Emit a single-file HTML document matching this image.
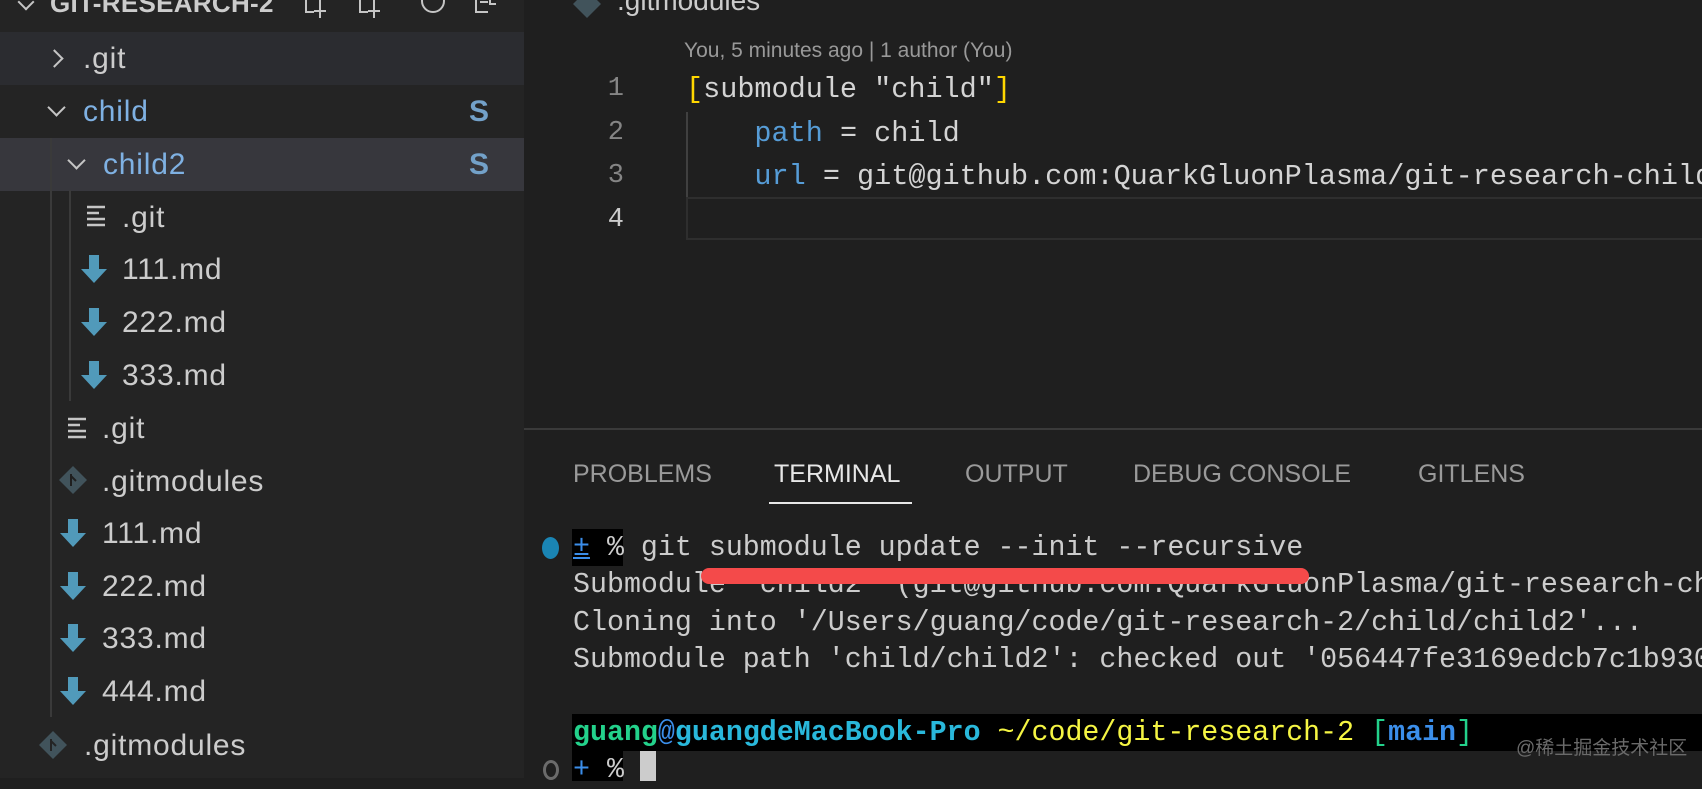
<!DOCTYPE html>
<html><head><meta charset="utf-8"><style>
*{margin:0;padding:0;box-sizing:border-box}
body{width:1702px;height:778px;overflow:hidden;background:#1f1f1f;position:relative;font-family:"Liberation Sans",sans-serif}
.a{position:absolute;white-space:pre}
#side{position:absolute;left:0;top:0;width:524px;height:778px;background:#242424}
.row{position:absolute;left:0;width:524px;height:53px}
.fn{position:absolute;font-size:30px;letter-spacing:0.8px;color:#cccccc;line-height:53px;white-space:pre}
.mono{font-family:"Liberation Mono",monospace}
.chev{position:absolute;width:13px;height:13px;border-right:2px solid #c5c5c5;border-bottom:2px solid #c5c5c5}
.arr{position:absolute;width:26px;height:30px}
.t{position:absolute;font-size:28.3px;color:#cccccc;line-height:37.3px;white-space:pre;font-family:"Liberation Mono",monospace}
</style></head><body>
<div id="side">
 <div class="row" style="top:32px;background:#2b2c30"></div>
 <div class="row" style="top:138px;background:#37373d"></div>
 <div class="chev" style="left:20px;top:-4px;transform:rotate(45deg);width:12px;height:12px"></div>
 <div class="a" style="left:50px;top:-12px;font-size:26px;font-weight:bold;color:#cccccc;letter-spacing:0.3px">GIT-RESEARCH-2</div>
 <svg class="a" style="left:300px;top:-6px" width="210" height="26" fill="none" stroke="#c5c5c5" stroke-width="2">
  <path d="M6 0v18h8M20 6v18M14 17h12"/>
  <path d="M60 0v18h8M74 6v18M68 17h12"/>
  <circle cx="133" cy="7" r="11"/>
  <path d="M176 0v18h12M180 8h8M190 0v10h6"/>
 </svg>
 <div class="a" style="left:50px;top:138px;width:2px;height:579px;background:#3a3a3a"></div>
 <div class="a" style="left:69px;top:190px;width:2px;height:211px;background:#3a3a3a"></div>
 <div class="chev" style="left:48px;top:52px;transform:rotate(-45deg)"></div>
 <div class="fn" style="left:83px;top:32px">.git</div>
 <div class="chev" style="left:50px;top:101px;transform:rotate(45deg)"></div>
 <div class="fn" style="left:83px;top:85px;color:#7fb1e3">child</div>
 <div class="fn" style="left:469px;top:85px;color:#73a1c9;font-weight:bold">S</div>
 <div class="chev" style="left:70px;top:154px;transform:rotate(45deg)"></div>
 <div class="fn" style="left:103px;top:138px;color:#7fb1e3">child2</div>
 <div class="fn" style="left:469px;top:138px;color:#73a1c9;font-weight:bold">S</div>
 <svg class="a" style="left:86px;top:205px" width="22" height="22" stroke="#c5c5c5" stroke-width="2.5"><path d="M1 2h18M1 8h12M1 14h18M1 20h18"/></svg>
 <div class="fn" style="left:122px;top:191px">.git</div>
 <svg class="arr" style="left:81px;top:255px" viewBox="0 0 26 30"><path fill="#519aba" d="M8 0h10v14h8L13 28 0 14h8z"/></svg>
 <div class="fn" style="left:122px;top:243px">111.md</div>
 <svg class="arr" style="left:81px;top:308px" viewBox="0 0 26 30"><path fill="#519aba" d="M8 0h10v14h8L13 28 0 14h8z"/></svg>
 <div class="fn" style="left:122px;top:296px">222.md</div>
 <svg class="arr" style="left:81px;top:361px" viewBox="0 0 26 30"><path fill="#519aba" d="M8 0h10v14h8L13 28 0 14h8z"/></svg>
 <div class="fn" style="left:122px;top:349px">333.md</div>
 <svg class="a" style="left:67px;top:417px" width="22" height="22" stroke="#c5c5c5" stroke-width="2.5"><path d="M1 2h18M1 8h12M1 14h18M1 20h18"/></svg>
 <div class="fn" style="left:102px;top:402px">.git</div>
 <svg class="a" style="left:59px;top:466px" width="28" height="28" viewBox="0 0 28 28"><path fill="#41535b" d="M14 0l14 14-14 14L0 14z"/><path stroke="#1f1f1f" stroke-width="2" fill="none" d="M12 8v12M12 10l5 5"/></svg>
 <div class="fn" style="left:102px;top:455px">.gitmodules</div>
 <svg class="arr" style="left:60px;top:519px" viewBox="0 0 26 30"><path fill="#519aba" d="M8 0h10v14h8L13 28 0 14h8z"/></svg>
 <div class="fn" style="left:102px;top:507px">111.md</div>
 <svg class="arr" style="left:60px;top:572px" viewBox="0 0 26 30"><path fill="#519aba" d="M8 0h10v14h8L13 28 0 14h8z"/></svg>
 <div class="fn" style="left:102px;top:560px">222.md</div>
 <svg class="arr" style="left:60px;top:624px" viewBox="0 0 26 30"><path fill="#519aba" d="M8 0h10v14h8L13 28 0 14h8z"/></svg>
 <div class="fn" style="left:102px;top:612px">333.md</div>
 <svg class="arr" style="left:60px;top:677px" viewBox="0 0 26 30"><path fill="#519aba" d="M8 0h10v14h8L13 28 0 14h8z"/></svg>
 <div class="fn" style="left:102px;top:665px">444.md</div>
 <svg class="a" style="left:39px;top:731px" width="28" height="28" viewBox="0 0 28 28"><path fill="#41535b" d="M14 0l14 14-14 14L0 14z"/><path stroke="#242424" stroke-width="2" fill="none" d="M12 8v12M12 10l5 5"/></svg>
 <div class="fn" style="left:84px;top:719px">.gitmodules</div>
</div>

<svg class="a" style="left:573px;top:-10px" width="28" height="28" viewBox="0 0 28 28"><path fill="#41535b" d="M14 0l14 14-14 14L0 14z"/></svg>
<div class="a" style="left:617px;top:-15px;font-size:28px;color:#cccccc">.gitmodules</div>
<div class="a" style="left:684px;top:39px;font-size:21px;color:#999999">You, 5 minutes ago | 1 author (You)</div>
<div class="a mono" style="left:560px;top:68px;width:64px;text-align:right;font-size:27px;line-height:43.5px;color:#858585">1
2
3
<span style="color:#cccccc">4</span></div>
<div class="a" style="left:686px;top:112px;width:2px;height:85px;background:#404040"></div>
<div class="a" style="left:686px;top:197px;width:1020px;height:43px;border:2px solid #2e2e2e;border-right:none"></div>
<div class="a mono" style="left:686px;top:68px;font-size:28.5px;line-height:43.5px;color:#d4d4d4"><span style="color:#ffd700">[</span>submodule "child"<span style="color:#ffd700">]</span>
    <span style="color:#569cd6">path</span> = child
    <span style="color:#569cd6">url</span> = git@github.com:QuarkGluonPlasma/git-research-child</div>

<div class="a" style="left:524px;top:428px;width:1178px;height:2px;background:#3a3a3a"></div>
<div class="a" style="left:573px;top:460px;font-size:25px;color:#9a9a9a">PROBLEMS</div>
<div class="a" style="left:774px;top:460px;font-size:25px;color:#e7e7e7">TERMINAL</div>
<div class="a" style="left:965px;top:460px;font-size:25px;color:#9a9a9a">OUTPUT</div>
<div class="a" style="left:1133px;top:460px;font-size:25px;color:#9a9a9a">DEBUG CONSOLE</div>
<div class="a" style="left:1418px;top:460px;font-size:25px;color:#9a9a9a">GITLENS</div>
<div class="a" style="left:769px;top:502px;width:143px;height:2px;background:#e7e7e7"></div>

<div class="a" style="left:542px;top:537px;width:17px;height:22px;border-radius:50%;background:#1a85b4"></div>
<div class="a" style="left:572px;top:529px;width:51px;height:37px;background:#000"></div>
<div class="t" style="left:573px;top:530px"><span style="color:#3b8eea;text-decoration:underline">±</span> % git submodule update --init --recursive
Submodule 'child2' (git@github.com:QuarkGluonPlasma/git-research-child2
Cloning into '/Users/guang/code/git-research-2/child/child2'...
Submodule path 'child/child2': checked out '056447fe3169edcb7c1b930</div>
<div class="a" style="left:701px;top:568px;width:608px;height:16px;border-radius:8px;background:#f44a4a"></div>
<div class="a" style="left:572px;top:714px;width:1130px;height:37px;background:#000"></div>
<div class="t" style="left:573px;top:715px"><span style="color:#23d18b;font-weight:bold">guang</span><span style="color:#3b8eea">@</span><span style="color:#29b8db;font-weight:bold">guangdeMacBook-Pro</span> <span style="color:#f5f543">~/code/git-research-2</span> <span style="color:#23d18b">[</span><span style="color:#3b8eea;font-weight:bold">main</span><span style="color:#23d18b">]</span></div>
<div class="a" style="left:1516px;top:733px;font-size:19px;color:#6a6a6a;font-family:'Liberation Sans','Noto Sans CJK SC',sans-serif">@稀土掘金技术社区</div>
<div class="a" style="left:543px;top:760px;width:16px;height:20px;border-radius:50%;border:3px solid #6b6b6b"></div>
<div class="a" style="left:572px;top:751px;width:51px;height:30px;background:#000"></div>
<div class="t" style="left:573px;top:752px"><span style="color:#3b8eea">+</span> %</div>
<div class="a" style="left:640px;top:751px;width:16px;height:30px;background:#cccccc"></div>
</body></html>
